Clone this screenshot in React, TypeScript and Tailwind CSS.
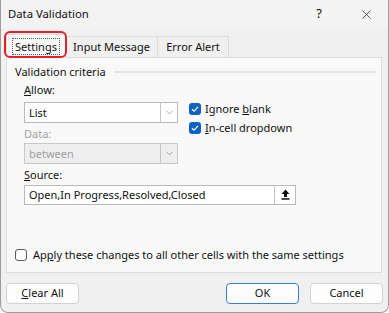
import { ChevronDown, X } from "lucide-react";

const font = { fontFamily: '"Segoe UI", "Noto Sans", sans-serif' };

function Check({ checked }: { checked: boolean }) {
  if (!checked) {
    return <span className="w-[12px] h-[12px] rounded-[3px] border border-[#5a5a5a] bg-white shrink-0" />;
  }
  return (
    <span className="w-[12px] h-[12px] rounded-[3px] bg-[#0f62c1] shrink-0 flex items-center justify-center">
      <svg width="8" height="8" viewBox="0 0 8 8">
        <path d="M1 4.2 L3.1 6.2 L7 1.8" fill="none" stroke="white" strokeWidth="1.2" />
      </svg>
    </span>
  );
}

function Combo({ value, disabled }: { value: string; disabled?: boolean }) {
  return (
    <div
      className={`w-[154px] h-[21px] flex items-stretch border ${
        disabled ? "border-[#c8c8c8] bg-[#eeeeee] text-[#a0a0a0]" : "border-[#b9b9b9] bg-white text-[#111]"
      }`}
    >
      <span className="flex-1 pl-[4px] leading-[19px]">{value}</span>
      <span className="w-[17px] border-l border-[#c4c4c4] flex items-center justify-center">
        <ChevronDown size={11} strokeWidth={1.3} color="#6d6d6d" />
      </span>
    </div>
  );
}

function Btn({ children, primary }: { children: React.ReactNode; primary?: boolean }) {
  return (
    <button
      className={`w-[73px] h-[21px] rounded-[4px] bg-[#fdfdfd] text-[11px] text-[#111] border ${
        primary ? "border-[#3b7fce]" : "border-[#d2d2d2]"
      }`}
    >
      {children}
    </button>
  );
}

export default function App() {
  return (
    <div
      style={font}
      className="relative w-[389px] h-[313px] bg-[#f0f0f0] text-[11px] text-[#111] border-x border-b border-[#9c9c9c] rounded-b-[8px] overflow-hidden flex flex-col"
    >
      {/* title bar */}
      <div className="h-[28px] flex items-center pl-[7px] bg-[#f3f3f3]">
        <span className="flex-1 text-[11.3px]">Data Validation</span>
        <span className="w-[30px] text-center text-[13px]">?</span>
        <span className="w-[44px] ml-[10px] flex justify-center">
          <X size={15} strokeWidth={1.1} />
        </span>
      </div>

      {/* tabs */}
      <div className="flex items-end pl-[5px] pt-[5px] h-[29px]">
        <div className="w-[60px] h-[24px] bg-[#f9f9f9] border border-b-0 border-[#dcdcdc] flex items-center justify-center relative z-10 -mb-[1px]">
          <span className="px-[2px] border border-dotted border-[#555] leading-[15px]">Settings</span>
        </div>
        <div className="w-[92px] h-[21px] border border-b-0 border-l-0 border-[#dcdcdc] flex items-center justify-center">
          Input Message
        </div>
        <div className="w-[71px] h-[21px] border border-b-0 border-l-0 border-[#dcdcdc] flex items-center justify-center">
          Error Alert
        </div>
      </div>

      {/* panel */}
      <div className="ml-[5px] w-[376px] h-[216px] bg-[#f9f9f9] border border-[#dcdcdc] flex flex-col">
        <div className="flex items-center pl-[8px] pr-[5px] pt-[6px]">
          <span>Validation criteria</span>
          <span className="flex-1 ml-[8px] h-[2px] bg-[#e6e6e6]" />
        </div>

        <div className="flex pl-[17px] pt-[1px]">
          <div className="flex flex-col">
            <span className="leading-[16px]">
              <span className="underline">A</span>llow:
            </span>
            <div className="mt-[4px]">
              <Combo value="List" />
            </div>
            <span className="leading-[16px] mt-[3px] text-[#a0a0a0]">Data:</span>
            <div className="mt-[1px]">
              <Combo value="between" disabled />
            </div>
          </div>
          <div className="flex flex-col gap-[7px] ml-[11px] pt-[21px]">
            <div className="flex items-center gap-[4px] leading-[12px]">
              <Check checked />
              <span>
                Ignore <span className="underline">b</span>lank
              </span>
            </div>
            <div className="flex items-center gap-[4px] leading-[12px]">
              <Check checked />
              <span>
                <span className="underline">I</span>n-cell dropdown
              </span>
            </div>
          </div>
        </div>

        <div className="pl-[17px] flex flex-col">
          <span className="leading-[16px] mt-[3px]">
            <span className="underline">S</span>ource:
          </span>
          <div className="mt-[2px] w-[272px] h-[20px] bg-white border border-[#b9b9b9] flex items-stretch">
            <span className="flex-1 pl-[4px] leading-[18px]">Open,In Progress,Resolved,Closed</span>
            <span className="w-[21px] border-l border-[#c4c4c4] flex items-center justify-center">
              <svg width="9" height="11" viewBox="0 0 9 11">
                <path d="M4.5 0.5 L8.5 5 L6 5 L6 8 L3 8 L3 5 L0.5 5 Z" fill="#111" />
                <rect x="0.5" y="9.2" width="8" height="1.5" fill="#111" />
              </svg>
            </span>
          </div>
        </div>

        <div className="mt-auto mb-[9px] pl-[8px] flex items-center gap-[6px]">
          <Check checked={false} />
          <span>
            Ap<span className="underline">p</span>ly these changes to all other cells with the same settings
          </span>
        </div>
      </div>

      {/* buttons */}
      <div className="flex items-center px-[5px] mt-[10px]">
        <Btn>
          <span className="underline">C</span>lear All
        </Btn>
        <span className="flex-1" />
        <Btn primary>OK</Btn>
        <span className="w-[11px]" />
        <Btn>Cancel</Btn>
      </div>

      {/* red highlight annotation */}
      <div className="absolute left-[3px] top-[31px] w-[63px] h-[27px] rounded-[6px] border-2 border-[#e3212b] z-20" />
    </div>
  );
}
